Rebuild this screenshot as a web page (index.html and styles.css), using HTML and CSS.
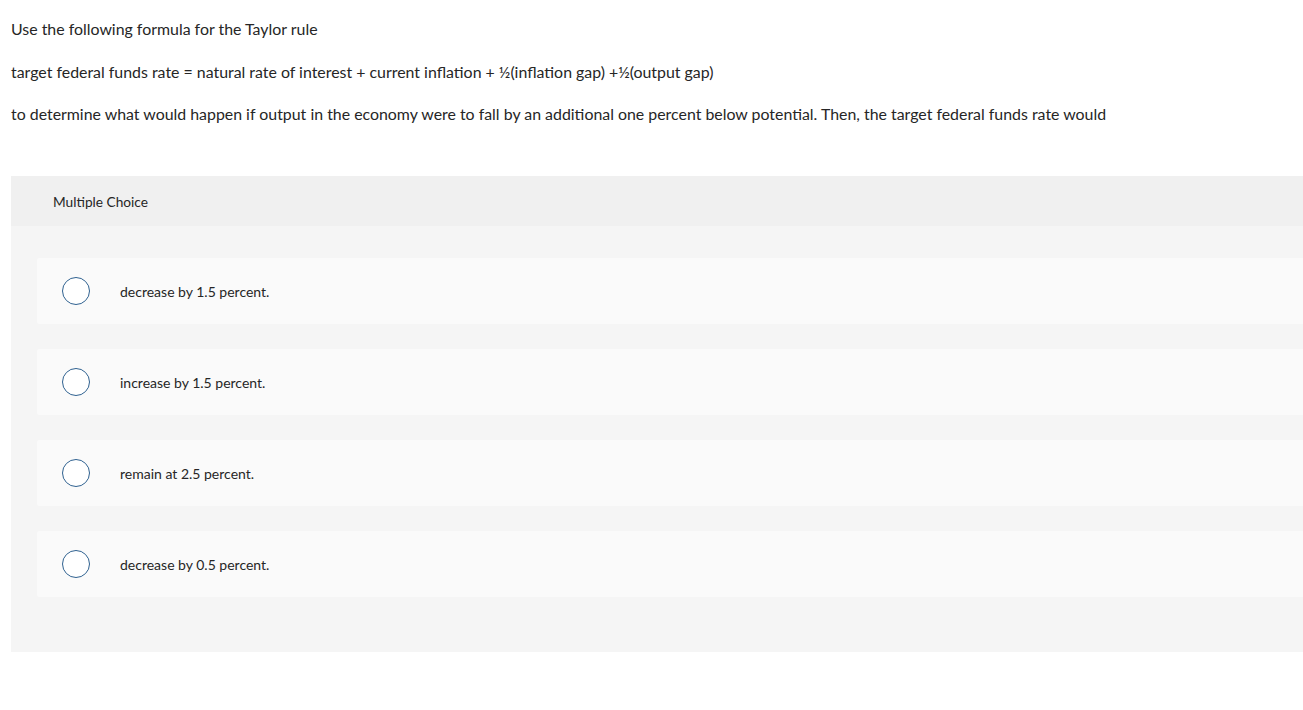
FILE: index.html
```html
<!DOCTYPE html>
<html>
<head>
<meta charset="utf-8">
<link rel="stylesheet" href="styles.css">
</head>
<body>
<div class="prompt">
  <p>Use the following formula for the Taylor rule</p>
  <p>target federal funds rate = natural rate of interest + current inflation + ½(inflation gap) +½(output gap)</p>
  <p>to determine what would happen if output in the economy were to fall by an additional one percent below potential. Then, the target federal funds rate would</p>
</div>
<div class="mc">
  <div class="mc-head">Multiple Choice</div>
  <div class="mc-body">
    <div class="opt"><span class="radio"></span><span class="label">decrease by 1.5 percent.</span></div>
    <div class="opt"><span class="radio"></span><span class="label">increase by 1.5 percent.</span></div>
    <div class="opt"><span class="radio"></span><span class="label">remain at 2.5 percent.</span></div>
    <div class="opt"><span class="radio"></span><span class="label">decrease by 0.5 percent.</span></div>
  </div>
</div>
</body>
</html>
```
FILE: styles.css
```css
html, body { margin: 0; padding: 0; background: #fff; }
body {
  font-family: "Lato", "Open Sans", sans-serif;
  color: #262626;
  padding-left: 11px;
  overflow: hidden;
  width: 1303px;
}
.prompt { padding-top: 19px; }
.prompt p {
  margin: 0 0 23.5px 0;
  font-size: 15.9px;
  line-height: 19px;
}
.mc {
  margin-top: 53px;
  width: 1320px;
}
.mc-head {
  background: #f0f0f0;
  height: 50px;
  display: flex;
  align-items: center;
  padding-left: 42px;
  font-size: 13.7px;
}
.mc-body {
  background: #f5f5f5;
  padding: 32px 0 55px 26px;
  display: flex;
  flex-direction: column;
  gap: 25px;
}
.opt {
  background: #fafafa;
  height: 66px;
  display: flex;
  align-items: center;
  border-radius: 2px;
}
.radio {
  width: 28px;
  height: 28px;
  border: 1.5px solid #2f6190;
  border-radius: 50%;
  margin-left: 25px;
  box-sizing: border-box;
  background: #fff;
}
.label {
  margin-left: 30px;
  font-size: 14px;
}
```
